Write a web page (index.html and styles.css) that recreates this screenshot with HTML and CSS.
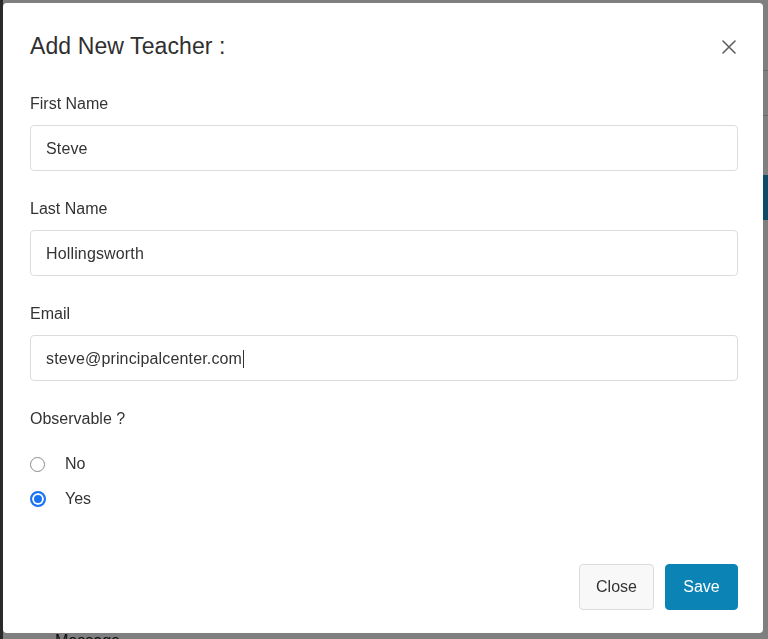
FILE: index.html
```html
<!DOCTYPE html>
<html lang="en">
<head>
<meta charset="utf-8">
<title>Add New Teacher</title>
<link rel="stylesheet" href="styles.css">
</head>
<body>
<div class="page">
  <aside class="sidebar"></aside>
  <main class="main">
    <div class="topbar"></div>
    <div class="subbar"></div>
    <div class="actions"><div class="teal-btn"></div></div>
    <div class="message">Message</div>
  </main>
</div>
<div class="backdrop"></div>
<div class="modal" role="dialog" aria-labelledby="modal-title">
  <div class="modal-header">
    <h2 class="modal-title" id="modal-title">Add New Teacher :</h2>
    <button class="close-x" type="button" aria-label="Close">
      <svg width="14" height="14" viewBox="0 0 14 14"><path d="M1 1L13 13M13 1L1 13" stroke="#5f5f5f" stroke-width="1.6" fill="none" stroke-linecap="round"/></svg>
    </button>
  </div>
  <div class="modal-body">
    <div class="group">
      <div class="label">First Name</div>
      <div class="input" role="textbox">Steve</div>
    </div>
    <div class="group">
      <div class="label">Last Name</div>
      <div class="input" role="textbox">Hollingsworth</div>
    </div>
    <div class="group">
      <div class="label">Email</div>
      <div class="input" role="textbox">steve@principalcenter.com<span class="caret"></span></div>
    </div>
    <div class="group">
      <div class="label">Observable ?</div>
      <div class="radio-list">
        <label class="radio-row"><input type="radio" name="obs" value="no"><span>No</span></label>
        <label class="radio-row"><input type="radio" name="obs" value="yes" checked><span>Yes</span></label>
      </div>
    </div>
  </div>
  <div class="modal-footer">
    <button class="btn btn-light" type="button">Close</button>
    <button class="btn btn-primary" type="button">Save</button>
  </div>
</div>
</body>
</html>
```
FILE: styles.css
```css
* { box-sizing: border-box; }
html, body { margin: 0; height: 100%; }
body {
  font-family: "Liberation Sans", Arial, Helvetica, sans-serif;
  color: #333;
  background: #fff;
  overflow: hidden;
}
.page { display: flex; height: 639px; }
.sidebar { width: 3px; flex: none; background: #555; }
.main { flex: 1; display: flex; flex-direction: column; background: #fff; }
.topbar { height: 71px; flex: none; border-bottom: 1px solid #d4d4d4; }
.subbar { height: 45px; flex: none; border-bottom: 1px solid #d4d4d4; }
.actions { display: flex; justify-content: flex-end; margin-top: 59px; flex: none; }
.teal-btn { width: 160px; height: 45px; background: #1894cc; }
.message {
  margin-top: 409px;
  padding-left: 52px;
  font-size: 16px;
  line-height: 24px;
  color: #222;
}
.backdrop {
  position: fixed;
  inset: 0;
  background: rgba(0, 0, 0, 0.5);
}
.modal {
  position: absolute;
  top: 3px;
  left: 3px;
  width: 760px;
  height: 630px;
  background: #fff;
  border-radius: 4px;
  display: flex;
  flex-direction: column;
}
.modal-header {
  display: flex;
  justify-content: space-between;
  align-items: flex-start;
  padding: 29px 25px 0 27px;
}
.modal-title {
  margin: 0;
  font-size: 23px;
  line-height: 28px;
  font-weight: 400;
  color: #2f2f2f;
  letter-spacing: 0.1px;
}
.close-x {
  border: 0;
  background: none;
  padding: 0;
  margin: 8px 2px 0 0;
  width: 14px;
  height: 14px;
  display: flex;
  cursor: pointer;
}
.modal-body { padding: 30px 25px 0 27px; }
.group { margin-bottom: 24px; }
.label {
  font-size: 16px;
  line-height: 24px;
  padding-top: 2px;
  margin-bottom: 9px;
  color: #333;
}
.input {
  height: 46px;
  border: 1px solid #dcdcdc;
  border-radius: 4px;
  padding: 0 15px;
  font-size: 16px;
  line-height: 45px;
  color: #333;
  background: #fff;
  letter-spacing: 0.15px;
}
.caret {
  display: inline-block;
  width: 1px;
  height: 18px;
  background: #333;
  vertical-align: -4px;
  margin-left: 1px;
}
.radio-list {
  display: flex;
  flex-direction: column;
  gap: 11px;
  padding-top: 12px;
}
.radio-row {
  display: flex;
  align-items: center;
  gap: 20px;
  height: 24px;
  font-size: 16px;
  color: #333;
}
.radio-row input {
  appearance: none;
  -webkit-appearance: none;
  margin: 0;
  width: 15px;
  height: 15px;
  border: 1px solid #8a8a8a;
  border-radius: 50%;
  background: #fff;
}
.radio-row input:checked {
  width: 16px;
  height: 16px;
  margin-left: -0.5px;
  margin-right: -0.5px;
  border: 2px solid #1a74f2;
  background: #1a74f2;
  box-shadow: inset 0 0 0 2px #fff;
}
.modal-footer {
  margin-top: auto;
  display: flex;
  justify-content: flex-end;
  gap: 11px;
  padding: 0 25px 23px 27px;
}
.btn {
  height: 46px;
  border-radius: 4px;
  font-family: inherit;
  font-size: 16px;
  padding: 0;
  text-align: center;
  cursor: pointer;
}
.btn-light {
  width: 75px;
  background: #f8f8f8;
  border: 1px solid #dcdcdc;
  color: #333;
}
.btn-primary {
  width: 73px;
  background: #0b83b4;
  border: 1px solid #0b83b4;
  color: #fff;
}
```
